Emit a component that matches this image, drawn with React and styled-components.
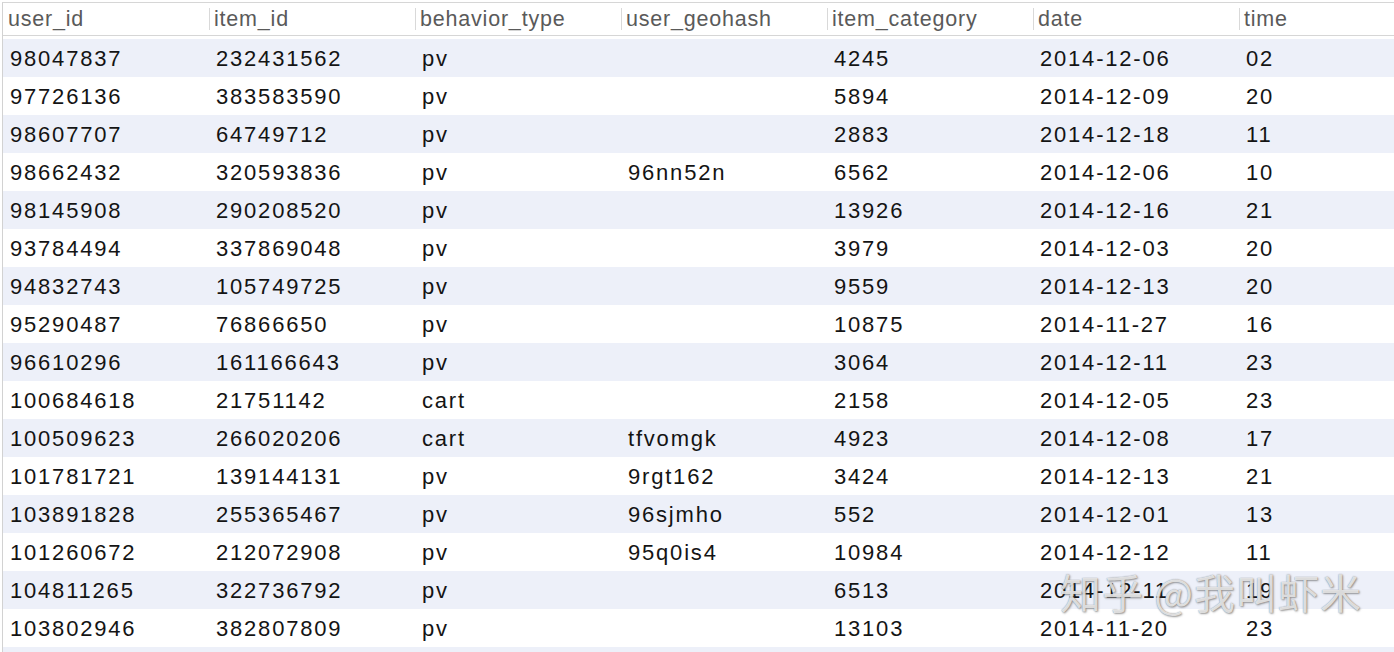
import styled, { createGlobalStyle } from "styled-components";

const GlobalStyle = createGlobalStyle`
  html, body {
    margin: 0;
    padding: 0;
    background: #ffffff;
    overflow: hidden;
  }
  body {
    font-family: "Liberation Sans", "Noto Sans CJK SC", sans-serif;
  }
`;

const Page = styled.div`
  position: relative;
  width: 1394px;
  height: 652px;
  overflow: hidden;
  padding: 2px 0 0 2px;
  box-sizing: border-box;
`;

const Table = styled.div`
  border-top: 1px solid #d6d6d6;
  border-left: 1px solid #d2d2d2;
  min-height: 700px;
`;

const Columns = styled.div`
  display: grid;
  grid-template-columns: repeat(6, 206px) 1fr;
`;

const HeaderRow = styled(Columns)`
  height: 32px;
  border-bottom: 1px solid #d6d6d6;
  margin-bottom: 3px;
`;

const HeaderCell = styled.div`
  position: relative;
  display: flex;
  align-items: center;
  padding: 1px 0 0 5px;
  font-size: 21.5px;
  letter-spacing: 0.8px;
  color: #5a5a5a;

  &::before {
    content: "";
    display: ${(p) => (p.$first ? "none" : "block")};
    position: absolute;
    left: 0;
    top: 5px;
    bottom: 5px;
    width: 1px;
    background: #d9d9d9;
  }
`;

const Row = styled(Columns)`
  height: 38px;
  background: ${(p) => (p.$striped ? "#edf0f9" : "#ffffff")};
`;

const Cell = styled.div`
  display: flex;
  align-items: center;
  padding: 2px 0 0 7px;
  font-size: 22px;
  letter-spacing: 1.8px;
  color: #141414;
  white-space: nowrap;
`;

const Watermark = styled.div`
  position: absolute;
  left: 1060px;
  top: 561px;
  font-family: "Noto Sans CJK SC", sans-serif;
  font-size: 41px;
  letter-spacing: 1px;
  color: rgba(255, 255, 255, 0.75);
  text-shadow: 0 0 1px rgba(90, 90, 90, 0.7), 1px 1px 2px rgba(80, 80, 80, 0.55);
  white-space: nowrap;
  pointer-events: none;
`;

const headers = [
  "user_id",
  "item_id",
  "behavior_type",
  "user_geohash",
  "item_category",
  "date",
  "time",
];

const rows = [
  ["98047837", "232431562", "pv", "", "4245", "2014-12-06", "02"],
  ["97726136", "383583590", "pv", "", "5894", "2014-12-09", "20"],
  ["98607707", "64749712", "pv", "", "2883", "2014-12-18", "11"],
  ["98662432", "320593836", "pv", "96nn52n", "6562", "2014-12-06", "10"],
  ["98145908", "290208520", "pv", "", "13926", "2014-12-16", "21"],
  ["93784494", "337869048", "pv", "", "3979", "2014-12-03", "20"],
  ["94832743", "105749725", "pv", "", "9559", "2014-12-13", "20"],
  ["95290487", "76866650", "pv", "", "10875", "2014-11-27", "16"],
  ["96610296", "161166643", "pv", "", "3064", "2014-12-11", "23"],
  ["100684618", "21751142", "cart", "", "2158", "2014-12-05", "23"],
  ["100509623", "266020206", "cart", "tfvomgk", "4923", "2014-12-08", "17"],
  ["101781721", "139144131", "pv", "9rgt162", "3424", "2014-12-13", "21"],
  ["103891828", "255365467", "pv", "96sjmho", "552", "2014-12-01", "13"],
  ["101260672", "212072908", "pv", "95q0is4", "10984", "2014-12-12", "11"],
  ["104811265", "322736792", "pv", "", "6513", "2014-12-11", "19"],
  ["103802946", "382807809", "pv", "", "13103", "2014-11-20", "23"],
  ["", "", "", "", "", "", ""],
];

export default function App() {
  return (
    <Page>
      <GlobalStyle />
      <Table>
        <HeaderRow>
          {headers.map((h, i) => (
            <HeaderCell key={h} $first={i === 0}>
              {h}
            </HeaderCell>
          ))}
        </HeaderRow>
        {rows.map((r, i) => (
          <Row key={i} $striped={i % 2 === 0}>
            {r.map((v, j) => (
              <Cell key={j}>{v}</Cell>
            ))}
          </Row>
        ))}
      </Table>
      <Watermark>知乎 @我叫虾米</Watermark>
    </Page>
  );
}
